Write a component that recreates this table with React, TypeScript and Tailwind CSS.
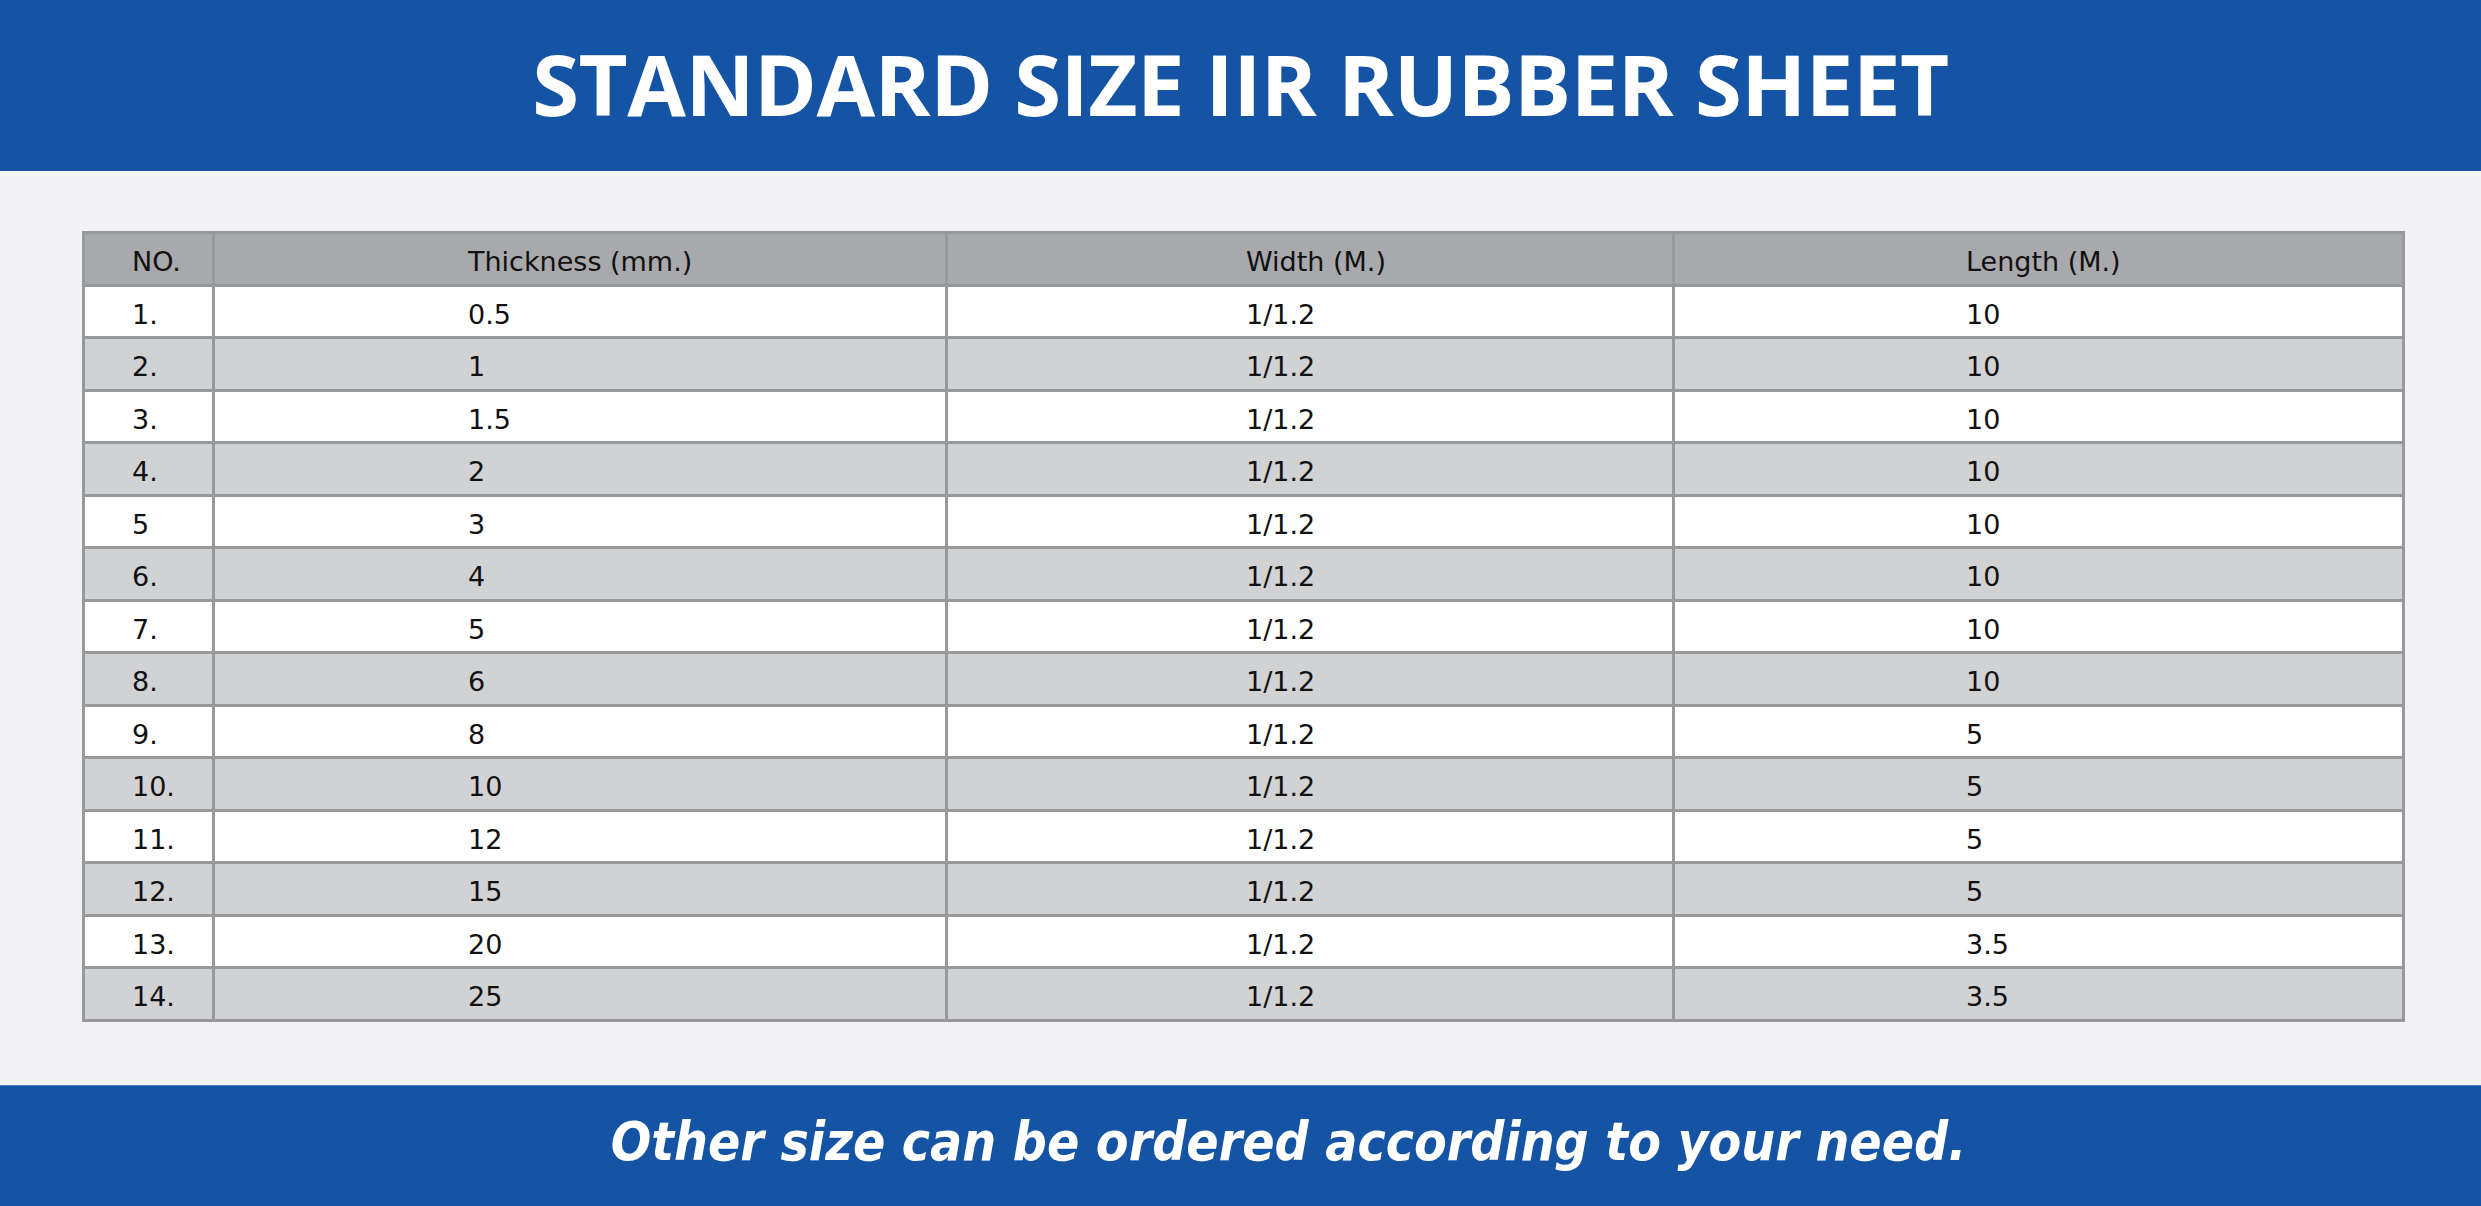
const rows = [
  ["1.", "0.5", "1/1.2", "10"],
  ["2.", "1", "1/1.2", "10"],
  ["3.", "1.5", "1/1.2", "10"],
  ["4.", "2", "1/1.2", "10"],
  ["5", "3", "1/1.2", "10"],
  ["6.", "4", "1/1.2", "10"],
  ["7.", "5", "1/1.2", "10"],
  ["8.", "6", "1/1.2", "10"],
  ["9.", "8", "1/1.2", "5"],
  ["10.", "10", "1/1.2", "5"],
  ["11.", "12", "1/1.2", "5"],
  ["12.", "15", "1/1.2", "5"],
  ["13.", "20", "1/1.2", "3.5"],
  ["14.", "25", "1/1.2", "3.5"],
];

const pads = ["pl-[47px]", "pl-[253px]", "pl-[298px]", "pl-[291px]"];

const Cell = ({ text, col, bg }: { text: string; col: number; bg: string }) => (
  <div className={`h-[49.5px] flex items-center pt-[6px] ${pads[col]} ${bg}`}>{text}</div>
);

const App = () => {
  return (
    <div className="w-full h-[1206px] flex flex-col bg-[#f3f3f5]">
      <header className="h-[171px] shrink-0 bg-[#1554a4] flex items-center justify-center">
        <h1
          className="text-white text-[85px] font-bold leading-none pb-[4px] tracking-[-0.5px]"
          style={{ fontFamily: "'Open Sans', sans-serif" }}
        >
          STANDARD SIZE IIR RUBBER SHEET
        </h1>
      </header>

      <main className="flex-1 pt-[60px] pl-[82px]">
        <div
          className="w-[2323px] grid grid-cols-[127px_730px_724px_727px] gap-[3px] p-[3px] bg-[#98999b] text-[27px] text-[#111] leading-none"
          style={{ fontFamily: "'DejaVu Sans', sans-serif" }}
        >
          {["NO.", "Thickness (mm.)", "Width (M.)", "Length (M.)"].map((h, i) => (
            <Cell key={h} text={h} col={i} bg="bg-[#a8a9ac]" />
          ))}
          {rows.map((r, ri) =>
            r.map((v, ci) => (
              <Cell key={`${ri}-${ci}`} text={v} col={ci} bg={ri % 2 === 0 ? "bg-white" : "bg-[#d1d2d4]"} />
            ))
          )}
        </div>
      </main>

      <footer className="h-[121px] shrink-0 bg-[#1554a4] border-t border-[#4a7cc0] flex items-center justify-center pl-[96px]">
        <p
          className="text-white text-[53px] font-bold italic leading-none pb-[10px] [font-stretch:condensed]"
          style={{ fontFamily: "'DejaVu Sans Condensed', 'DejaVu Sans', sans-serif" }}
        >
          Other size can be ordered according to your need.
        </p>
      </footer>
    </div>
  );
};

export default App;
